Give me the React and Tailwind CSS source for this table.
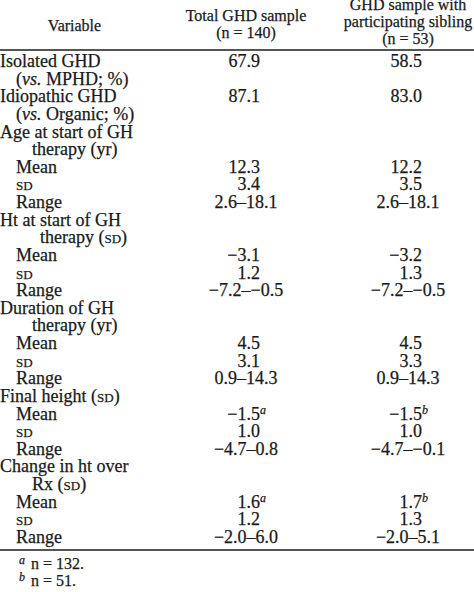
import React from "react";

const SD = () => <span className="text-[13px]">SD</span>;

const Sup = ({ c }) => (
  <span className="relative -top-[6px] inline-block w-0 whitespace-nowrap text-left italic text-[12px] leading-none">
    {c}
  </span>
);

const rows = [
  { label: "Isolated GHD", indent: 0, v1: "67.9", v2: "58.5" },
  { label: <>(<i>vs.</i> MPHD; %)</>, indent: 16 },
  { label: "Idiopathic GHD", indent: 0, v1: "87.1", v2: "83.0" },
  { label: <>(<i>vs.</i> Organic; %)</>, indent: 16 },
  { label: "Age at start of GH", indent: 0 },
  { label: "therapy (yr)", indent: 32 },
  { label: "Mean", indent: 16, v1: "12.3", v2: "12.2" },
  { label: <SD />, indent: 16, v1: "3.4", v2: "3.5" },
  { label: "Range", indent: 16, v1: "2.6–18.1", v2: "2.6–18.1", range: true },
  { label: "Ht at start of GH", indent: 0 },
  { label: <>therapy (<SD />)</>, indent: 40 },
  { label: "Mean", indent: 16, v1: "−3.1", v2: "−3.2" },
  { label: <SD />, indent: 16, v1: "1.2", v2: "1.3" },
  { label: "Range", indent: 16, v1: "−7.2–−0.5", v2: "−7.2–−0.5", range: true },
  { label: "Duration of GH", indent: 0 },
  { label: "therapy (yr)", indent: 32 },
  { label: "Mean", indent: 16, v1: "4.5", v2: "4.5" },
  { label: <SD />, indent: 16, v1: "3.1", v2: "3.3" },
  { label: "Range", indent: 16, v1: "0.9–14.3", v2: "0.9–14.3", range: true },
  { label: <>Final height (<SD />)</>, indent: 0 },
  { label: "Mean", indent: 16, v1: "−1.5", s1: "a", v2: "−1.5", s2: "b" },
  { label: <SD />, indent: 16, v1: "1.0", v2: "1.0" },
  { label: "Range", indent: 16, v1: "−4.7–0.8", v2: "−4.7–−0.1", range: true },
  { label: "Change in ht over", indent: 0 },
  { label: <>Rx (<SD />)</>, indent: 32 },
  { label: "Mean", indent: 16, v1: "1.6", s1: "a", v2: "1.7", s2: "b" },
  { label: <SD />, indent: 16, v1: "1.2", v2: "1.3" },
  { label: "Range", indent: 16, v1: "−2.0–6.0", v2: "−2.0–5.1", range: true },
];

const indentCls = {
  0: "pl-0",
  16: "pl-[16px]",
  32: "pl-[32px]",
  40: "pl-[40px]",
};

export default function App() {
  return (
    <div className="w-[474px] h-[592px] overflow-hidden bg-white text-[#1a1a1a] font-['Liberation_Serif',serif] [-webkit-text-stroke:0.25px_#1a1a1a]">
      <div className="w-[490px]">
        {/* header */}
        <div className="grid grid-cols-[166px_160px_164px] items-center h-[52px] -mt-[5px] text-[16px] leading-[17px]">
          <div className="text-center pr-[17px] pt-[8px]">Variable</div>
          <div className="text-center pt-[6px]">
            <div>Total GHD sample</div>
            <div>(n = 140)</div>
          </div>
          <div className="text-center">
            <div>GHD sample with</div>
            <div>participating sibling</div>
            <div>(n = 53)</div>
          </div>
        </div>
        <div className="mt-[2px] h-[2px] bg-[#555]" />

        {/* body */}
        <div className="mt-[2px] text-[18px]">
          {rows.map((r, i) => (
            <div
              key={i}
              className="grid grid-cols-[166px_160px_164px] h-[17.63px] leading-[17.63px] whitespace-nowrap"
            >
              <div className={indentCls[r.indent]}>{r.label}</div>
              <div className={r.range ? "text-center" : "text-right pr-[66px]"}>
                {r.v1}
                {r.s1 && <Sup c={r.s1} />}
              </div>
              <div className={r.range ? "text-center" : "text-right pr-[68px]"}>
                {r.v2}
                {r.s2 && <Sup c={r.s2} />}
              </div>
            </div>
          ))}
        </div>
        <div className="mt-[2px] h-[2px] bg-[#555]" />

        {/* footnotes */}
        <div className="mt-[4px] pl-[19px] text-[16px] leading-[17.6px]">
          <div className="h-[17.6px]">
            <span className="relative -top-[5px] italic text-[12px] leading-none mr-[6px]">a</span>n = 132.
          </div>
          <div className="h-[17.6px]">
            <span className="relative -top-[5px] italic text-[12px] leading-none mr-[6px]">b</span>n = 51.
          </div>
        </div>
      </div>
    </div>
  );
}
